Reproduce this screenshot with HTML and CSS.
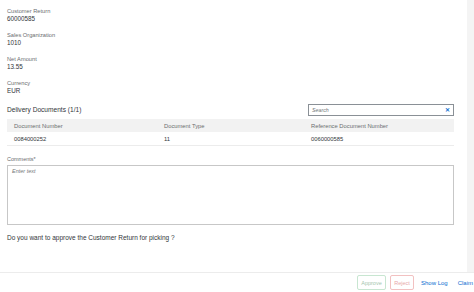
FILE: index.html
```html
<!DOCTYPE html>
<html>
<head>
<meta charset="utf-8">
<link rel="stylesheet" href="styles.css">
</head>
<body>
<div class="page">
  <div class="scroll">
    <div class="content">
      <div class="field"><div class="label">Customer Return</div><div class="value">60000585</div></div>
      <div class="field"><div class="label">Sales Organization</div><div class="value">1010</div></div>
      <div class="field"><div class="label">Net Amount</div><div class="value">13.55</div></div>
      <div class="field"><div class="label">Currency</div><div class="value">EUR</div></div>

      <div class="toolbar">
        <div class="title">Delivery Documents (1/1)</div>
        <div class="search"><span class="ph">Search</span><span class="clear">✕</span></div>
      </div>
      <div class="table">
        <div class="row head"><div class="c1">Document Number</div><div class="c2">Document Type</div><div class="c3">Reference Document Number</div></div>
        <div class="row"><div class="c1">0084000252</div><div class="c2">11</div><div class="c3">0060000585</div></div>
      </div>

      <div class="clabel">Comments<span class="req">*</span></div>
      <div class="textarea">Enter text</div>

      <div class="question">Do you want to approve the Customer Return for picking ?</div>
    </div>
    <div class="scrollbar"></div>
  </div>
  <div class="footer">
    <div class="btn approve">Approve</div>
    <div class="btn reject">Reject</div>
    <div class="link showlog">Show Log</div>
    <div class="link claim">Claim</div>
  </div>
</div>
</body>
</html>
```
FILE: styles.css
```css
html, body { margin: 0; padding: 0; background: #fff; }
body { font-family: "Liberation Sans", Arial, sans-serif; color: #32363a; font-size: 6px; line-height: 8px; }
.page { width: 474px; height: 292px; display: flex; flex-direction: column; overflow: hidden; }
.scroll { display: flex; height: 272px; border-bottom: 1px solid #ececec; }
.content { flex: 1; padding: 7px 13px 0 7px; }
.scrollbar { width: 7px; background: #f4f4f4; }
.field { margin-bottom: 8px; }
.label { font-size: 5.7px; line-height: 8px; color: #6a6d70; }
.value { font-size: 6.3px; line-height: 8px; color: #32363a; }
.toolbar { display: flex; justify-content: space-between; align-items: center; margin-top: 2px; height: 14px; }
.title { font-size: 6.6px; color: #32363a; }
.search { width: 138px; height: 10px; border: 1px solid #8a9096; display: flex; align-items: center; justify-content: space-between; padding: 0 3px; }
.search .ph { font-size: 5.3px; font-style: italic; color: #74777a; }
.search .clear { font-size: 6px; color: #0a6ed1; font-weight: bold; }
.table { margin-top: 2px; }
.row { display: flex; height: 13px; align-items: center; border-bottom: 1px solid #ececec; font-size: 5.8px; }
.row.head { background: #f2f2f2; color: #6a6d70; border-bottom: none; }
.row > div { box-sizing: border-box; }
.c1 { width: 157px; padding-left: 7px; }
.c2 { width: 147px; }
.c3 { flex: 1; }
.clabel { margin-top: 10px; font-size: 5.5px; line-height: 7px; color: #6a6d70; }
.textarea { margin-top: 2px; height: 54px; border: 1px solid #c7c7c7; padding: 2px 4px; font-size: 5.5px; line-height: 6px; font-style: italic; color: #74777a; }
.question { margin-top: 9px; font-size: 6.5px; line-height: 8px; color: #32363a; }
.footer { flex: 1; display: flex; align-items: center; justify-content: flex-end; padding-right: 1px; }
.btn { box-sizing: border-box; height: 15px; border: 1px solid; border-radius: 2px; font-size: 5.5px; display: flex; align-items: center; justify-content: center; }
.approve { width: 29px; border-color: #c8e6d1; color: #a5c6ae; }
.reject { width: 24px; border-color: #f2c1c1; color: #e7a7a7; margin-left: 4px; }
.link { font-size: 6px; color: #0a6ed1; }
.showlog { margin-left: 7px; }
.claim { margin-left: 10px; }
```
